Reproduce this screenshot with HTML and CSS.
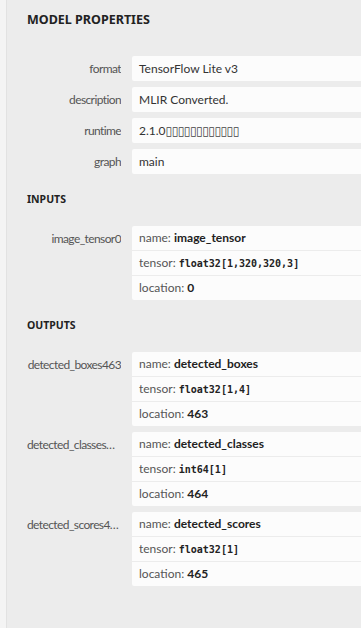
FILE: index.html
```html
<!DOCTYPE html>
<html>
<head>
<meta charset="utf-8">
<link rel="stylesheet" href="styles.css">
</head>
<body>
<div class="sidebar">
  <div class="edge"></div>
  <div class="panel">
    <div class="title">MODEL PROPERTIES</div>
    <div class="group">
      <div class="item"><div class="name">format</div><div class="value"><div class="line">TensorFlow Lite v3</div></div></div>
      <div class="item"><div class="name">description</div><div class="value"><div class="line">MLIR Converted.</div></div></div>
      <div class="item"><div class="name">runtime</div><div class="value"><div class="line">2.1.0<span class="tofu">▯▯▯▯▯▯▯▯▯▯▯▯</span></div></div></div>
      <div class="item"><div class="name">graph</div><div class="value"><div class="line">main</div></div></div>
    </div>
    <div class="header">INPUTS</div>
    <div class="group">
      <div class="item"><div class="name">image_tensor0</div><div class="value">
        <div class="line">name: <b>image_tensor</b></div>
        <div class="line">tensor: <code>float32[1,320,320,3]</code></div>
        <div class="line">location: <b>0</b></div>
      </div></div>
    </div>
    <div class="header">OUTPUTS</div>
    <div class="group outputs">
      <div class="item"><div class="name">detected_boxes463</div><div class="value">
        <div class="line">name: <b>detected_boxes</b></div>
        <div class="line">tensor: <code>float32[1,4]</code></div>
        <div class="line">location: <b>463</b></div>
      </div></div>
      <div class="item"><div class="name">detected_classes464</div><div class="value">
        <div class="line">name: <b>detected_classes</b></div>
        <div class="line">tensor: <code>int64[1]</code></div>
        <div class="line">location: <b>464</b></div>
      </div></div>
      <div class="item"><div class="name">detected_scores465</div><div class="value">
        <div class="line">name: <b>detected_scores</b></div>
        <div class="line">tensor: <code>float32[1]</code></div>
        <div class="line">location: <b>465</b></div>
      </div></div>
    </div>
  </div>
</div>
</body>
</html>
```
FILE: styles.css
```css
html, body {
  margin: 0;
  padding: 0;
  height: 628px;
  overflow: hidden;
}
body {
  background: #ececec;
  font-family: "Lato", "Noto Sans", sans-serif;
  font-size: 12px;
  color: #333;
}
.sidebar {
  display: flex;
  height: 628px;
}
.edge {
  width: 6px;
  flex: none;
  background: #f4f4f4;
  border-right: 1px solid #e2e2e2;
}
.panel {
  flex: 1;
  padding: 11px 0 0 20px;
}
.title {
  font-family: "Noto Sans", sans-serif;
  font-size: 12.5px;
  font-weight: bold;
  line-height: 18px;
  color: #222;
  margin-bottom: 27px;
}
.header {
  font-family: "Noto Sans", sans-serif;
  font-size: 10.5px;
  font-weight: bold;
  line-height: 16px;
  color: #222;
  margin: 17px 0 19px;
}
.group.outputs {
  margin-top: 2px;
}
.item {
  display: grid;
  grid-template-columns: 94px 260px;
  column-gap: 11px;
  margin-bottom: 6px;
}
.name {
  text-align: right;
  line-height: 25px;
  white-space: nowrap;
  overflow: hidden;
  text-overflow: ellipsis;
  color: #555;
  letter-spacing: -0.6px;
  align-self: start;
}
.value {
  background: #fcfcfc;
  border-radius: 2px;
}
.line {
  line-height: 24px;
  height: 24px;
  padding: 0 7px;
  white-space: nowrap;
  color: #555;
}
.value > .line:only-child {
  height: 25px;
  line-height: 25px;
  color: #333;
}
.line + .line {
  border-top: 1px solid #ececec;
}
.line b {
  color: #222;
}
.line code {
  font-family: "DejaVu Sans Mono", monospace;
  font-size: 10px;
  font-weight: bold;
  color: #222;
}
.tofu {
  font-family: "DejaVu Sans", sans-serif;
  font-size: 12px;
  letter-spacing: -0.5px;
  color: #444;
}
```
